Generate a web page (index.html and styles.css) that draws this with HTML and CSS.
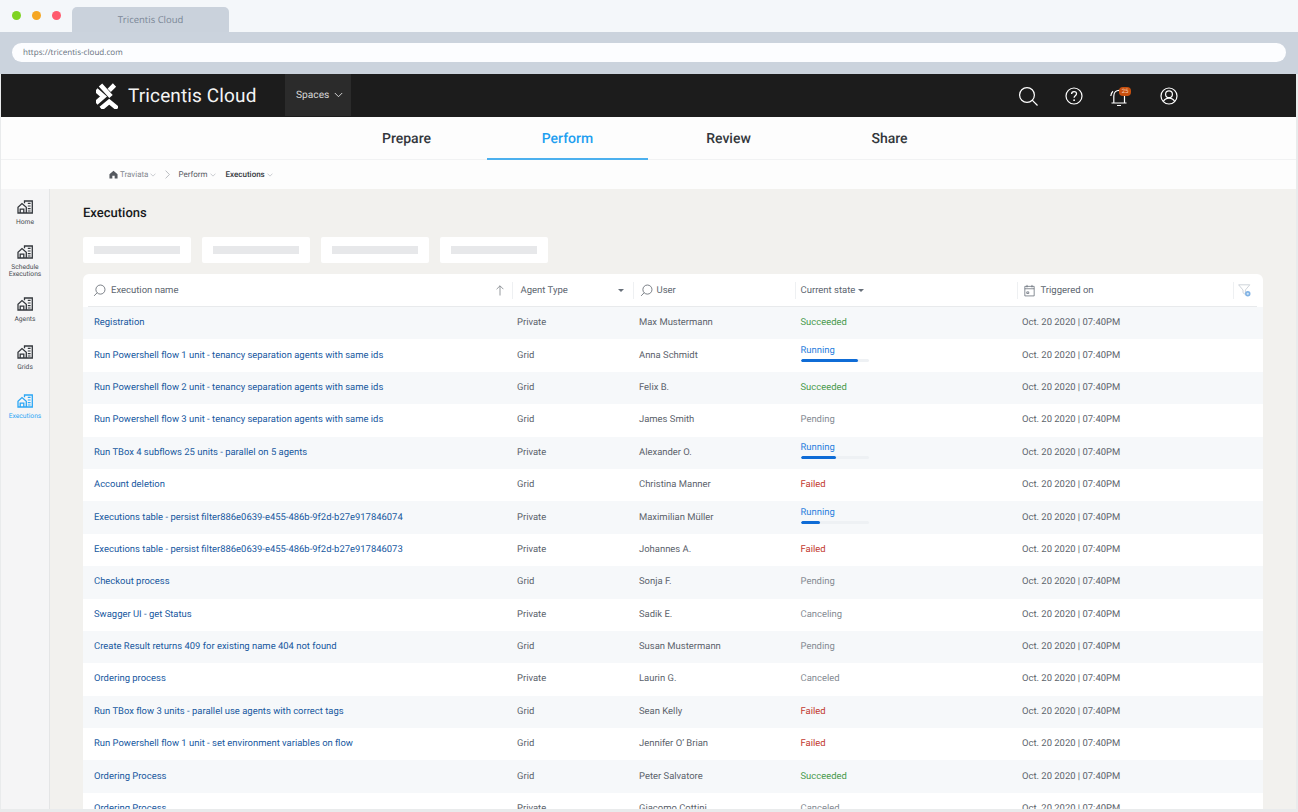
FILE: index.html
```html
<!DOCTYPE html>
<html lang="en">
<head>
<meta charset="utf-8">
<title>Tricentis Cloud</title>
<link rel="stylesheet" href="styles.css">
</head>
<body>
<svg class="defs" width="0" height="0" aria-hidden="true">
  <symbol id="building" viewBox="0 0 16 14">
    <path d="M7.500 3.200V1h7.800v12H1V7.200L5 3.600l4.300 3.600V13M3.200 13V9.200h3.600V13" fill="none" stroke="currentColor" stroke-width="1.300"/>
    <path d="M10.800 3.400h2.800M10.800 6h2.800M10.800 8.600h2.800M10.800 11h2.800" fill="none" stroke="currentColor" stroke-width="1.200"/>
  </symbol>
  <symbol id="lens" viewBox="0 0 14 14">
    <circle cx="8" cy="6" r="4.900" fill="none" stroke="currentColor" stroke-width=".8"/>
    <path d="M4.400 9.500 1.200 12.800" fill="none" stroke="currentColor" stroke-width=".8"/>
  </symbol>
  <symbol id="chev" viewBox="0 0 8 5">
    <path d="M.7.7 4 4 7.300.7" fill="none" stroke="currentColor" stroke-width=".8"/>
  </symbol>
</svg>
<div class="window">
  <div class="tabstrip">
    <span class="dot dot-green"></span>
    <span class="dot dot-orange"></span>
    <span class="dot dot-red"></span>
    <div class="browser-tab">Tricentis Cloud</div>
  </div>
  <div class="addressbar">
    <div class="url">https://tricentis-cloud.com</div>
  </div>
  <div class="app">
    <header class="topbar">
      <svg class="logo" viewBox="0 0 22 26" aria-hidden="true">
        <path d="M4.500 2 15 13.500M18.500 2 13.200 7.300M0 7 7.500 13.500 0 20M5 25.500 13.200 18.800 21.500 25.500" fill="none" stroke="#fff" stroke-width="4.600"/>
      </svg>
      <div class="brand">Tricentis Cloud</div>
      <div class="spaces">Spaces <svg class="spaces-chev" aria-hidden="true"><use href="#chev"/></svg></div>
      <div class="top-icons">
        <svg class="ti" viewBox="0 0 20 20" aria-hidden="true"><circle cx="9" cy="9" r="7.400" fill="none" stroke="#fff" stroke-width="1.200"/><path d="M14.200 14.200 19.500 19.500" stroke="#fff" stroke-width="1.200"/></svg>
        <svg class="ti" viewBox="0 0 20 20" aria-hidden="true"><circle cx="10" cy="10" r="8" fill="none" stroke="#fff" stroke-width="1.200"/><path d="M7.600 8c0-3.200 4.900-3.200 4.900-.2 0 2-2.400 2-2.400 4" fill="none" stroke="#fff" stroke-width="1.300"/><circle cx="10.100" cy="14.200" r=".9" fill="#fff"/></svg>
        <div class="bell">
          <svg class="ti" viewBox="0 0 20 20" aria-hidden="true"><path d="M2.500 17h15M4.800 17V10C4.800 2.500 15.500 2.500 15.500 10V17M8 19.500h4M1.800 10c.2-2.200.9-3.600 2.200-4.800M18.200 10c-.2-2.200-.9-3.600-2.200-4.800" fill="none" stroke="#fff" stroke-width="1.200"/></svg>
          <span class="badge">25</span>
        </div>
        <svg class="ti ti-user" viewBox="0 0 20 20" aria-hidden="true"><circle cx="10" cy="10" r="8" fill="none" stroke="#fff" stroke-width="1.200"/><circle cx="10" cy="8.300" r="3.400" fill="none" stroke="#fff" stroke-width="1.200"/><path d="M4.300 15.500c1.500-2.600 3.400-3.300 5.700-3.300s4.200.7 5.700 3.300" fill="none" stroke="#fff" stroke-width="1.200"/></svg>
      </div>
    </header>
    <nav class="mainnav">
      <a class="navtab">Prepare</a>
      <a class="navtab navtab-active">Perform</a>
      <a class="navtab">Review</a>
      <a class="navtab">Share</a>
    </nav>
    <div class="crumbs">
      <svg class="crumb-home" viewBox="0 0 10 10" aria-hidden="true"><path fill="#55595f" d="M5 .8 9.500 4.600V9.500H6.300V6.500H3.700V9.500H.5V4.600z"/></svg>
      <span class="crumb crumb-muted">Traviata</span><svg class="crumb-chev" aria-hidden="true"><use href="#chev"/></svg>
      <svg class="crumb-sep" viewBox="0 0 5 9" aria-hidden="true"><path d="M.6.6 4.400 4.500.6 8.400" fill="none" stroke="#a9adb3" stroke-width=".8"/></svg>
      <span class="crumb">Perform</span><svg class="crumb-chev crumb-chev-wide" aria-hidden="true"><use href="#chev"/></svg>
      <span class="crumb crumb-strong">Executions</span><svg class="crumb-chev" aria-hidden="true"><use href="#chev"/></svg>
    </div>
    <div class="workspace">
      <aside class="sidebar">
        <div class="side-item side-home"><svg class="side-icon"><use href="#building"/></svg><span>Home</span></div>
        <div class="side-item side-sched"><svg class="side-icon"><use href="#building"/></svg><span>Schedule<br>Executions</span></div>
        <div class="side-item side-agents"><svg class="side-icon"><use href="#building"/></svg><span>Agents</span></div>
        <div class="side-item side-grids"><svg class="side-icon"><use href="#building"/></svg><span>Grids</span></div>
        <div class="side-item side-active"><svg class="side-icon"><use href="#building"/></svg><span>Executions</span></div>
      </aside>
      <main class="content">
        <h1 class="title">Executions</h1>
        <div class="filters">
          <div class="filter"><span class="skeleton"></span></div>
          <div class="filter"><span class="skeleton"></span></div>
          <div class="filter"><span class="skeleton"></span></div>
          <div class="filter"><span class="skeleton"></span></div>
        </div>
        <section class="table">
          <div class="thead">
            <div class="th th-name"><svg class="th-lens"><use href="#lens"/></svg><span>Execution name</span>
              <svg class="th-sort" viewBox="0 0 8 11" aria-hidden="true"><path d="M4 10.500V.8M.6 4.200 4 .8l3.400 3.400" fill="none" stroke="#7b8087" stroke-width=".8"/></svg></div>
            <div class="th th-type"><span>Agent Type</span><i class="caret caret-end"></i></div>
            <div class="th th-user"><svg class="th-lens"><use href="#lens"/></svg><span>User</span></div>
            <div class="th th-state"><span>Current state</span><i class="caret"></i></div>
            <div class="th th-date"><svg class="th-cal" viewBox="0 0 12 13" aria-hidden="true"><path d="M.9 2h10.200v10.400H.9zM.9 4.600h10.200M3.300.4v2.700M8.700.4v2.700M3 8h2.200v1.800H3z" fill="none" stroke="#5d6670" stroke-width=".8"/></svg><span>Triggered on</span></div>
            <div class="th th-filter"><svg class="th-funnel" viewBox="0 0 13 13" aria-hidden="true"><path d="M.6.8h11.200L7.400 6v4.500L5 8.800V6z" fill="none" stroke="#c3c9d0" stroke-width=".8"/><circle cx="9.800" cy="9.800" r="2.700" fill="#7fb2e5"/><path d="M8.600 9.800h2.400M9.800 8.600V11" stroke="#fff" stroke-width=".6"/></svg></div>
          </div>
          <div class="row"><a class="c-name">Registration</a><span class="c-type">Private</span><span class="c-user">Max Mustermann</span><span class="c-state ok">Succeeded</span><span class="c-date">Oct. 20 2020 | 07:40PM</span></div>
          <div class="row"><a class="c-name">Run Powershell flow 1 unit - tenancy separation agents with same ids</a><span class="c-type">Grid</span><span class="c-user">Anna Schmidt</span><span class="c-state run">Running<span class="bar"><i style="width:85%"></i></span></span><span class="c-date">Oct. 20 2020 | 07:40PM</span></div>
          <div class="row"><a class="c-name">Run Powershell flow 2 unit - tenancy separation agents with same ids</a><span class="c-type">Grid</span><span class="c-user">Felix B.</span><span class="c-state ok">Succeeded</span><span class="c-date">Oct. 20 2020 | 07:40PM</span></div>
          <div class="row"><a class="c-name">Run Powershell flow 3 unit - tenancy separation agents with same ids</a><span class="c-type">Grid</span><span class="c-user">James Smith</span><span class="c-state idle">Pending</span><span class="c-date">Oct. 20 2020 | 07:40PM</span></div>
          <div class="row"><a class="c-name">Run TBox 4 subflows 25 units - parallel on 5 agents</a><span class="c-type">Private</span><span class="c-user">Alexander O.</span><span class="c-state run">Running<span class="bar"><i style="width:52%"></i></span></span><span class="c-date">Oct. 20 2020 | 07:40PM</span></div>
          <div class="row"><a class="c-name">Account deletion</a><span class="c-type">Grid</span><span class="c-user">Christina Manner</span><span class="c-state bad">Failed</span><span class="c-date">Oct. 20 2020 | 07:40PM</span></div>
          <div class="row"><a class="c-name">Executions table - persist filter886e0639-e455-486b-9f2d-b27e917846074</a><span class="c-type">Private</span><span class="c-user">Maximilian Müller</span><span class="c-state run">Running<span class="bar"><i style="width:28%"></i></span></span><span class="c-date">Oct. 20 2020 | 07:40PM</span></div>
          <div class="row"><a class="c-name">Executions table - persist filter886e0639-e455-486b-9f2d-b27e917846073</a><span class="c-type">Private</span><span class="c-user">Johannes A.</span><span class="c-state bad">Failed</span><span class="c-date">Oct. 20 2020 | 07:40PM</span></div>
          <div class="row"><a class="c-name">Checkout process</a><span class="c-type">Grid</span><span class="c-user">Sonja F.</span><span class="c-state idle">Pending</span><span class="c-date">Oct. 20 2020 | 07:40PM</span></div>
          <div class="row"><a class="c-name">Swagger UI - get Status</a><span class="c-type">Private</span><span class="c-user">Sadik E.</span><span class="c-state idle">Canceling</span><span class="c-date">Oct. 20 2020 | 07:40PM</span></div>
          <div class="row"><a class="c-name">Create Result returns 409 for existing name 404 not found</a><span class="c-type">Grid</span><span class="c-user">Susan Mustermann</span><span class="c-state idle">Pending</span><span class="c-date">Oct. 20 2020 | 07:40PM</span></div>
          <div class="row"><a class="c-name">Ordering process</a><span class="c-type">Private</span><span class="c-user">Laurin G.</span><span class="c-state idle">Canceled</span><span class="c-date">Oct. 20 2020 | 07:40PM</span></div>
          <div class="row"><a class="c-name">Run TBox flow 3 units - parallel use agents with correct tags</a><span class="c-type">Grid</span><span class="c-user">Sean Kelly</span><span class="c-state bad">Failed</span><span class="c-date">Oct. 20 2020 | 07:40PM</span></div>
          <div class="row"><a class="c-name">Run Powershell flow 1 unit - set environment variables on flow</a><span class="c-type">Grid</span><span class="c-user">Jennifer O’ Brian</span><span class="c-state bad">Failed</span><span class="c-date">Oct. 20 2020 | 07:40PM</span></div>
          <div class="row"><a class="c-name">Ordering Process</a><span class="c-type">Grid</span><span class="c-user">Peter Salvatore</span><span class="c-state ok">Succeeded</span><span class="c-date">Oct. 20 2020 | 07:40PM</span></div>
          <div class="row"><a class="c-name">Ordering Process</a><span class="c-type">Private</span><span class="c-user">Giacomo Cottini</span><span class="c-state idle">Canceled</span><span class="c-date">Oct. 20 2020 | 07:40PM</span></div>
        </section>
      </main>
    </div>
  </div>
</div>
</body>
</html>
```
FILE: styles.css
```css
* { box-sizing: border-box; }
html, body { margin: 0; height: 100%; overflow: hidden; }
body { background: #e9ebec; font-family: Roboto, "Liberation Sans", sans-serif; color: #4f5660; text-rendering: geometricPrecision; }
.defs { display: block; height: 0; }

.window { width: 1298px; height: 812px; display: flex; flex-direction: column; overflow: hidden; }

.tabstrip { height: 32px; background: #f4f7fa; display: flex; align-items: flex-start; padding: 11px 0 0 12px; flex: none; }
.dot { width: 9px; height: 9px; border-radius: 50%; margin-right: 11px; }
.dot-green { background: #7ed321; }
.dot-orange { background: #f5a623; }
.dot-red { background: #ff5a6e; margin-right: 0; }
.browser-tab { margin: -4px 0 0 11px; width: 157px; height: 25px; background: #cad2dc; border-radius: 5px 5px 0 0; text-align: center; font-size: 9.500px; line-height: 26px; color: #7a8796; font-family: "Open Sans", sans-serif; }

.addressbar { height: 42px; background: #cbd3dd; padding: 11px 12px 0; flex: none; }
.url { height: 19px; background: #fcfdff; border-radius: 10px; padding-left: 11px; font-size: 8.100px; line-height: 19px; color: #66707c; font-family: "Open Sans", sans-serif; }

.app { flex: 1; margin: 0 2px 3px 1px; display: flex; flex-direction: column; min-height: 0; background: #fdfdfd; }

.topbar { height: 43px; background: #1c1c1c; display: flex; align-items: center; padding-left: 95px; flex: none; }
.logo { width: 22px; height: 26px; }
.brand { margin-left: 10px; width: 157px; color: #f4f4f4; font-size: 19px; letter-spacing: .13px; }
.spaces { width: 66px; height: 42px; align-self: flex-start; background: #2b2b2b; color: #d6d6d6; font-size: 10.200px; display: flex; align-items: center; padding-left: 11px; gap: 5px; }
.spaces-chev { width: 9px; height: 6px; color: #e4e4e4; }
.top-icons { margin-left: auto; margin-right: 117px; display: flex; align-items: center; gap: 26px; }
.ti { width: 20px; height: 20px; display: block; }
.ti-user { margin-left: 4px; }
.bell { position: relative; margin-left: -1px; }
.badge { position: absolute; top: 1px; left: 10px; width: 12px; height: 9px; border-radius: 4px; background: #c8500f; color: #f4c9ad; font-size: 6px; line-height: 9px; text-align: center; }

.mainnav { height: 43px; padding-left: 325px; display: flex; border-bottom: 1px solid #f1f2f3; flex: none; }
.navtab { width: 161px; text-align: center; font-size: 14px; font-weight: 500; line-height: 44px; color: #33373c; }
.navtab-active { color: #1f9ff0; border-bottom: 2px solid #4cb0ee; height: 43px; }

.crumbs { height: 29px; padding-left: 108px; display: flex; align-items: center; flex: none; font-size: 8px; }
.crumb-home { width: 9px; height: 9px; margin-right: 2px; }
.crumb { color: #55595f; }
.crumb-muted { color: #85898f; }
.crumb-strong { color: #33373c; font-weight: 500; }
.crumb-chev { width: 6px; height: 4px; margin: 0 9px 0 2px; color: #a9adb3; }
.crumb-chev-wide { margin-right: 10px; }
.crumb-chev:last-child { margin-right: 0; }
.crumb-sep { width: 5px; height: 9px; margin: 0 8px 0 0; }

.workspace { flex: 1; display: flex; min-height: 0; background: #f2f1ee; }
.sidebar { width: 49px; background: #f5f5f6; border-right: 1px solid #e4e5e6; flex: none; display: flex; flex-direction: column; align-items: center; color: #4a4e54; }
.side-item { display: flex; flex-direction: column; align-items: center; text-align: center; font-size: 6.700px; line-height: 7.500px; }
.side-icon { width: 16px; height: 14px; margin-bottom: 5px; color: #33373c; }
.side-home { margin-top: 11px; }
.side-sched { margin-top: 18px; }
.side-agents { margin-top: 18px; }
.side-grids { margin-top: 22px; }
.side-active { margin-top: 22px; color: #2ba6f5; }
.side-active .side-icon { color: #2ba6f5; }

.content { flex: 1; min-width: 0; padding-left: 33px; overflow: hidden; }
.title { margin: 16px 0 0; font-size: 13px; line-height: 17px; font-weight: 500; color: #17191c; }
.filters { display: flex; gap: 11px; margin-top: 15px; }
.filter { width: 108px; height: 26px; background: #fff; border-radius: 2px; padding: 9px 11px; }
.skeleton { display: block; height: 8px; background: #e7e8ea; }

.table { width: 1180px; margin-top: 11px; background: #fff; border-radius: 6px 6px 0 0; }
.thead { height: 33px; display: grid; grid-template-columns: 424px 121px 162px 221.500px 1fr 24px; margin: 0 6px 0 5px; border-bottom: 1px solid #e8eaec; align-items: center; font-size: 9.500px; color: #5d6670; }
.th { height: 17px; display: flex; align-items: center; border-left: 1px solid #eef0f2; }
.th-name { border-left: 0; padding-left: 5px; }
.th-type { padding-left: 7.500px; }
.th-user { padding-left: 5.500px; }
.th-state { padding-left: 4.500px; }
.th-date { padding-left: 6px; }
.th-filter { padding-left: 3.500px; }
.th-lens { width: 13px; height: 13px; margin-right: 5px; color: #4f5660; }
.th-user .th-lens { margin-right: 4px; }
.th-sort { width: 8px; height: 11px; margin-left: auto; margin-right: 8.500px; }
.caret { width: 0; height: 0; border: 3px solid transparent; border-top: 3.500px solid #68707a; border-bottom: 0; margin-left: 3px; }
.caret-end { margin-left: auto; margin-right: 9px; }
.th-cal { width: 11px; height: 13px; margin-right: 6px; }
.th-funnel { width: 13px; height: 13px; }

.row { height: 32.400px; padding-bottom: 1px; display: grid; grid-template-columns: 423px 122px 161.500px 221.500px 1fr; align-items: center; padding-left: 11px; font-size: 9.450px; color: #5c636c; }
.row:nth-child(even) { background: #f6f8fa; }
.c-name { color: #18599f; }
.c-state { position: relative; }
.ok { color: #4a9a4d; }
.bad { color: #c23a30; }
.idle { color: #858b93; }
.run { color: #2b80dd; margin-top: -10px; }
.bar { position: absolute; left: 0; top: 14.500px; width: 68px; height: 3px; background: #eef1f4; border-radius: 2px; overflow: hidden; }
.bar i { display: block; height: 3px; background: #0f6cd6; border-radius: 2px; }
```
